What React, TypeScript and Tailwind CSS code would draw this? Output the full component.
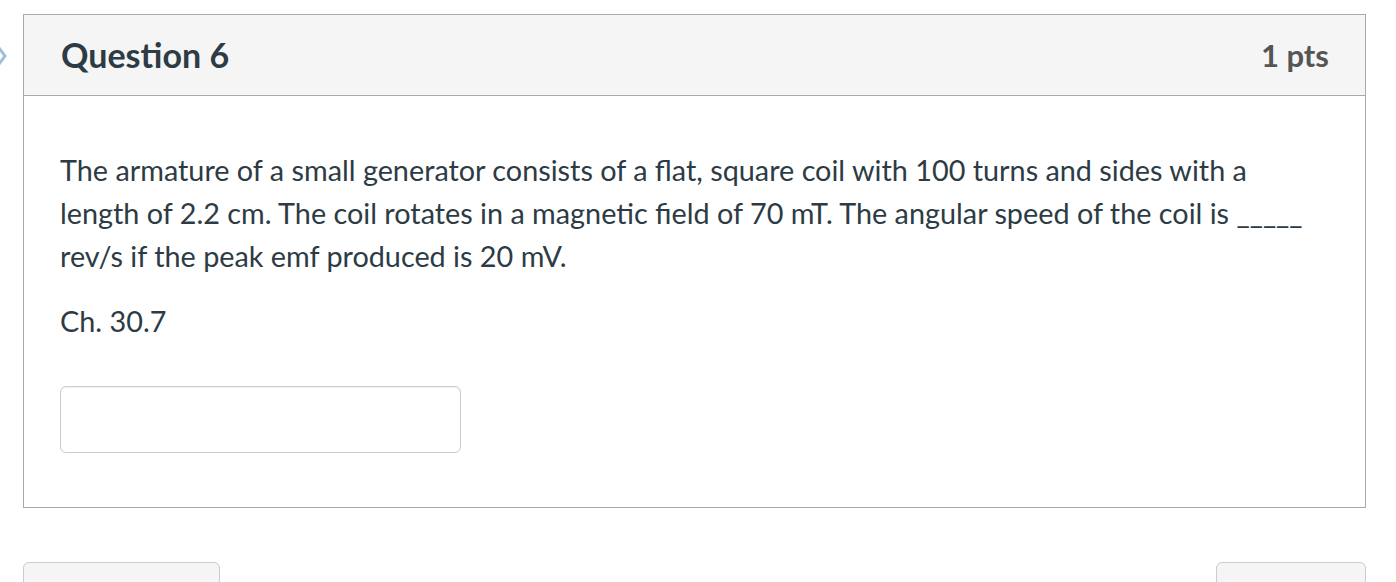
const QuestionCard = () => {
  return (
    <div className="border border-[#aaaaaa] bg-white">
      <div className="flex items-center justify-between h-[81px] bg-[#f5f5f5] border-b border-[#aaaaaa] pl-[37px] pr-[36px]">
        <h2 className="text-[34px] font-bold text-[#2d3b45] leading-none">Question 6</h2>
        <span className="text-[31px] font-bold text-[#555555] leading-none">1 pts</span>
      </div>
      <div className="pl-[36px] pr-[36px] pt-[53px] pb-[54px] text-[28.8px] leading-[43px] text-[#2d3b45]">
        <p>
          The armature of a small generator consists of a flat, square coil with 100 turns and sides with a length
          of 2.2 cm. The coil rotates in a magnetic field of 70 mT. The angular speed of the coil is _____ rev/s if
          the peak emf produced is 20 mV.
        </p>
        <p className="mt-[22px]">Ch. 30.7</p>
        <input
          type="text"
          aria-label="answer"
          className="block mt-[43px] w-[401px] h-[67px] rounded-[6px] border border-[#c7cdd1] bg-white shadow-[inset_0_1px_2px_rgba(0,0,0,0.06)]"
        />
      </div>
    </div>
  );
};

const App = () => {
  return (
    <div
      className="relative w-[1396px] h-[582px] overflow-hidden bg-white pt-[14px] pl-[23px] pr-[30px]"
      style={{ fontFamily: "Lato, 'Liberation Sans', sans-serif" }}
    >
      <svg className="absolute left-[-8px] top-[41px]" width="16" height="30" viewBox="0 0 16 30">
        <path d="M4 3 L13 15 L4 27" fill="none" stroke="#9fc0d9" strokeWidth="3" />
      </svg>
      <QuestionCard />
      <div className="flex justify-between mt-[54px]">
        <button className="w-[197px] h-[40px] rounded-[6px] border border-[#c7cdd1] bg-[#f5f5f5]"></button>
        <button className="w-[150px] h-[40px] rounded-[6px] border border-[#c7cdd1] bg-[#f5f5f5]"></button>
      </div>
    </div>
  );
};

export default App;
